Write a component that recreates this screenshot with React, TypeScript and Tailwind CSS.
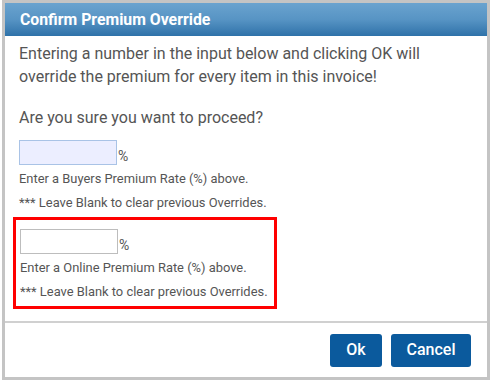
export default function App() {
  return (
    <div className="w-[492px] h-[382px] bg-white" style={{ fontFamily: 'Roboto, "Liberation Sans", sans-serif' }}>
      <div className="ml-[2px] w-[488px] h-[380px] border-[3px] border-[#c4c4c4] flex flex-col bg-white">
        {/* Header */}
        <div className="h-[33px] bg-gradient-to-b from-[#6aa3cf] via-[#5794c4] to-[#2e72a9] flex items-center pl-[15px]">
          <span className="text-white font-bold text-[15.8px]">Confirm Premium Override</span>
        </div>

        {/* Body */}
        <div className="flex-1 px-[14px] pt-[6px] text-[#555]">
          <p className="text-[16px] leading-[23px]">
            Entering a number in the input below and clicking OK will
            <br />
            override the premium for every item in this invoice!
          </p>
          <p className="text-[16px] leading-[23px] mt-[18px]">Are you sure you want to proceed?</p>

          <div className="mt-[11px]">
            <RateField label="Enter a Buyers Premium Rate (%) above." filled />
          </div>

          <div className="mt-[6px] -ml-[6px] w-[264px] border-[3px] border-[#ff0000] pl-[4px] pt-[9px] pb-[6px]">
            <RateField label="Enter a Online Premium Rate (%) above." />
          </div>
        </div>

        {/* Footer */}
        <div className="h-[56px] border-t-2 border-[#d0d0d0] flex items-center justify-end gap-[9px] pr-[16px]">
          <button className="h-[33px] w-[52px] rounded-[3px] bg-[#0b5a9d] text-white text-[16px] font-medium">Ok</button>
          <button className="h-[33px] w-[80px] rounded-[3px] bg-[#0b5a9d] text-white text-[16px] font-medium">Cancel</button>
        </div>
      </div>
    </div>
  );
}

function RateField({ label, filled }: { label: string; filled?: boolean }) {
  return (
    <div>
      <div className="flex items-end">
        <input
          type="text"
          className={`w-[98px] h-[25px] border ${filled ? 'bg-[#eceeff] border-[#a9c3e6]' : 'bg-white border-[#bdbdbd]'} outline-none`}
        />
        <span className="text-[14px] text-[#555] ml-[1px] leading-[18px]">%</span>
      </div>
      <p className="text-[12.9px] mt-[6px] leading-[16px]">{label}</p>
      <p className="text-[12.9px] mt-[8px] leading-[16px]">*** Leave Blank to clear previous Overrides.</p>
    </div>
  );
}
